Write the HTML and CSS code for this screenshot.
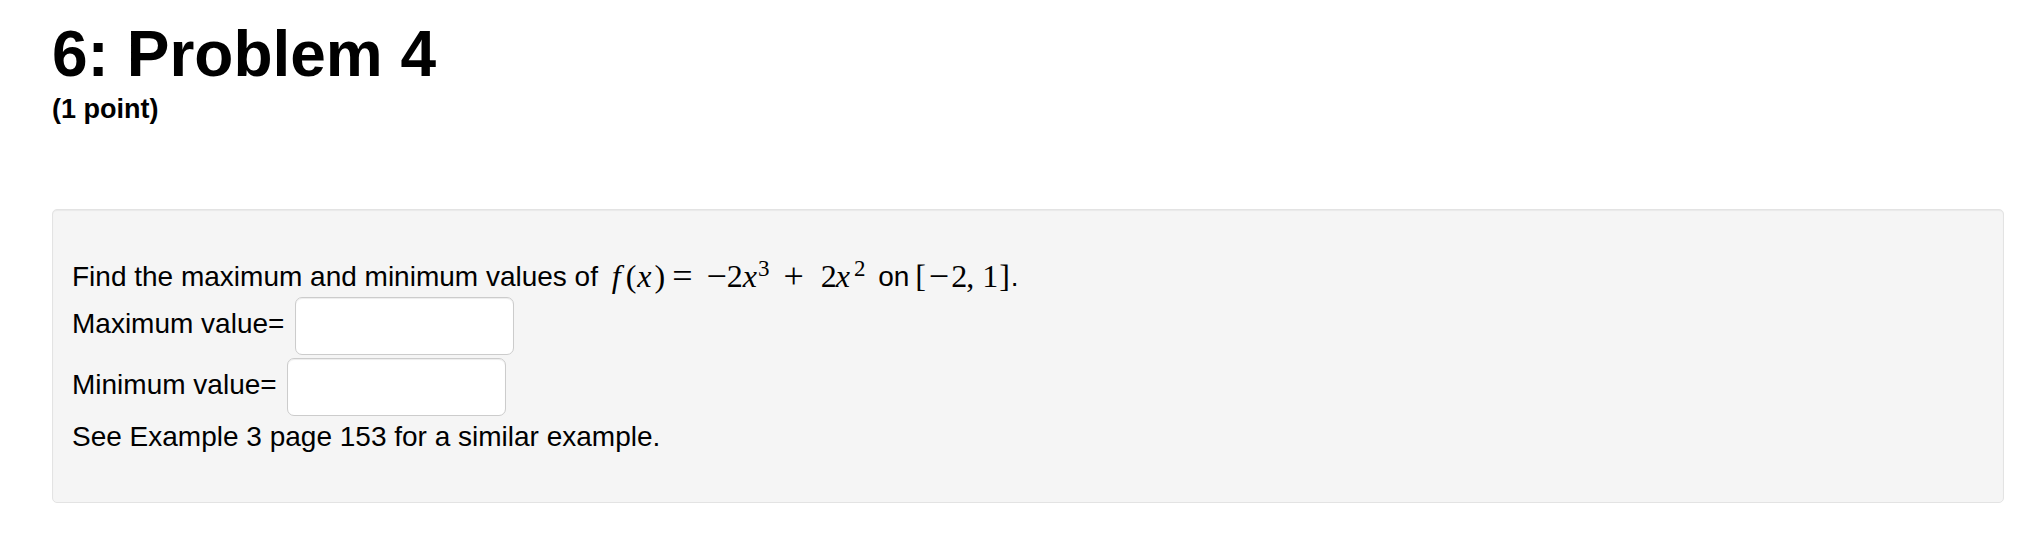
FILE: index.html
```
<!DOCTYPE html>
<html lang="en">
<head>
<meta charset="utf-8">
<title>6: Problem 4</title>
<link rel="stylesheet" href="styles.css">
</head>
<body>
<div class="page">
  <h1 class="title">6: Problem 4</h1>
  <div class="points">(1 point)</div>
  <div class="well">
    <div class="q-line">Find the maximum and minimum values of <span class="math m1"><span class="mi g-f">f</span><span class="g-lp">(</span><span class="mi g-x1">x</span><span class="g-rp">)</span><span class="op g-eq">=</span><span class="op g-neg">&minus;</span><span class="g-2a">2</span><span class="mi g-xa">x</span><span class="sup g-s3">3</span><span class="op g-plus">+</span><span class="g-2b">2</span><span class="mi g-xb">x</span><span class="sup g-s2">2</span></span> on <span class="math m2"><span class="g-lb">[</span><span class="op g-neg2">&minus;</span><span class="g-2c">2</span><span class="g-comma">,</span><span class="g-one">1</span><span class="g-rb">]</span></span>.</div>
    <div class="ans-row">
      <label class="ans-label" for="ans1">Maximum value=</label>
      <input class="ans-input" id="ans1" type="text">
    </div>
    <div class="ans-row ans-row-2">
      <label class="ans-label" for="ans2">Minimum value=</label>
      <input class="ans-input" id="ans2" type="text">
    </div>
    <div class="note">See Example 3 page 153 for a similar example.</div>
  </div>
</div>
</body>
</html>
```
FILE: styles.css
```
html, body {
  margin: 0;
  padding: 0;
  background: #ffffff;
}

body {
  font-family: "Liberation Sans", Arial, Helvetica, sans-serif;
  color: #000000;
}

.page {
  padding: 24px 30px 0 52px;
}

.title {
  margin: 0;
  font-size: 64px;
  line-height: 61px;
  font-weight: 700;
}

.points {
  margin-top: 11px;
  font-size: 27px;
  line-height: 27px;
  font-weight: 700;
}

.well {
  margin-top: 86px;
  background: #f5f5f5;
  border: 1px solid #e3e3e3;
  border-radius: 5px;
  box-shadow: inset 0 1px 1px rgba(0, 0, 0, 0.05);
  padding: 19px 19px 47px 19px;
  font-size: 28px;
}

.q-line {
  margin-top: 30px;
  line-height: 36px;
  white-space: nowrap;
}

.math {
  font-family: "Liberation Serif", "Times New Roman", serif;
  font-size: 32px;
  line-height: 28px;
  vertical-align: -1px;
}

.math > span {
  display: inline-block;
}

.mi {
  font-style: italic;
}

.op {
  font-size: 36px;
  vertical-align: -1px;
}

.sup {
  font-size: 23px;
  line-height: 0;
  vertical-align: 11px;
}

.m1 { margin-right: 5px; }
.m2 { margin-right: 1px; }

.g-f { margin-left: 6px; }
.g-lp { margin-left: 5px; }
.g-x1 { margin-left: 1px; }
.g-rp { margin-left: 3px; }
.g-eq { margin-left: 7px; }
.g-neg { margin-left: 14px; }
.g-2a { margin-left: 0; }
.g-xa { margin-left: 0; }
.g-s3 { margin-left: 1px; }
.g-plus { margin-left: 14px; }
.g-2b { margin-left: 17px; }
.g-xb { margin-left: -1px; }
.g-s2 { margin-left: 4px; }

.g-lb { margin-left: -2px; }
.g-neg2 { margin-left: 3px; }
.g-2c { margin-left: 2px; }
.g-comma { margin-left: -1px; }
.g-one { margin-left: 8px; }
.g-rb { margin-left: 1px; }

.ans-row {
  display: flex;
  align-items: center;
  height: 58px;
  margin-top: 2px;
}

.ans-row-2 {
  margin-top: 3px;
}

.ans-label {
  line-height: 32px;
  margin-bottom: 4px;
  white-space: nowrap;
}

.ans-input {
  box-sizing: border-box;
  width: 219px;
  height: 58px;
  margin: 0 0 0 10.5px;
  padding: 6px 12px;
  border: 1.5px solid #cccccc;
  border-radius: 7px;
  background: #ffffff;
  box-shadow: inset 0 1px 1px rgba(0, 0, 0, 0.075);
  font-family: inherit;
  font-size: 28px;
}

.note {
  margin-top: 3px;
  line-height: 36px;
}
```
